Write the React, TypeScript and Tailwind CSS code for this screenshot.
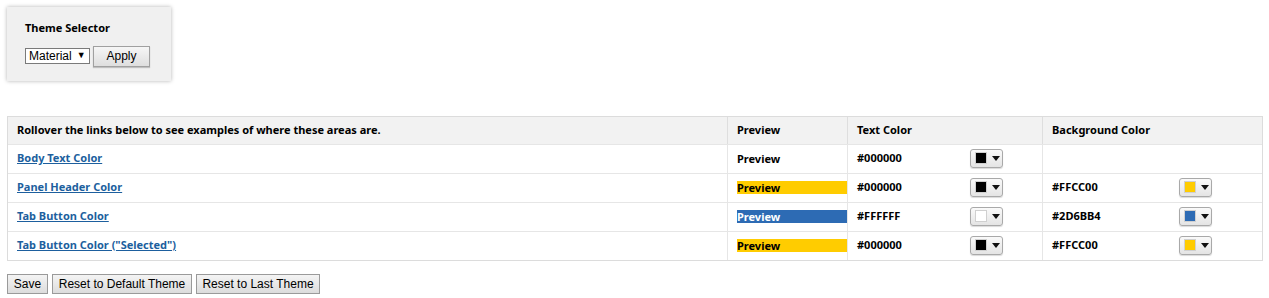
import React from "react";

const tf = { fontFamily: '"Noto Sans", Tahoma, sans-serif' };

function Swatch({ color }: { color: string }) {
  return (
    <div className="flex h-[19px] w-[33px] items-center rounded-[3px] border border-[#a9a9a9] bg-gradient-to-b from-[#fafafa] to-[#e4e4e4] pl-[4px] shadow-[0_1px_1px_rgba(0,0,0,0.15)]">
      <div className="h-[12px] w-[12px] border border-[#d0d0d0]" style={{ backgroundColor: color }} />
      <svg width="8" height="5" viewBox="0 0 8 5" className="ml-[5px]">
        <path d="M0 0h8L4 5z" fill="#111" />
      </svg>
    </div>
  );
}

function Row({
  label,
  prevBg,
  prevFg,
  text,
  textSw,
  bg,
  bgSw,
}: {
  label: string;
  prevBg?: string;
  prevFg: string;
  text: string;
  textSw: string;
  bg?: string;
  bgSw?: string;
}) {
  return (
    <div className="flex h-[29px] items-center border-t border-[#e6e6e6] text-[11px] font-bold text-black">
      <div className="flex h-full w-[720px] items-center border-r border-[#e6e6e6] pb-[2px] pl-[9px]">
        <a href="#" className="text-[#1d5f9e] underline">
          {label}
        </a>
      </div>
      <div className="flex h-full w-[120px] items-center border-r border-[#e6e6e6] pb-[2px] pl-[9px]">
        <div
          className="flex h-[13px] w-full items-center leading-none"
          style={{ backgroundColor: prevBg, color: prevFg }}
        >
          Preview
        </div>
      </div>
      <div className="flex h-full w-[195px] items-center border-r border-[#e6e6e6] pb-[2px] pl-[9px]">
        <span className="w-[113px]">{text}</span>
        <Swatch color={textSw} />
      </div>
      <div className="flex h-full flex-1 items-center pb-[2px] pl-[9px]">
        {bg && (
          <>
            <span className="w-[127px]">{bg}</span>
            <Swatch color={bgSw!} />
          </>
        )}
      </div>
    </div>
  );
}

export default function App() {
  return (
    <div className="relative h-[298px] w-[1269px] overflow-hidden bg-white" style={tf}>
      <div className="pl-[7px] pt-[7px]">
        <div className="h-[74px] w-[164px] bg-[#f0f0f0] pl-[18px] pt-[13px] shadow-[0_0_4px_rgba(0,0,0,0.3)]">
          <div className="text-[11px] font-bold text-black">Theme Selector</div>
          <div className="mt-[9px] flex items-center" style={{ fontFamily: '"Liberation Sans", Arial, sans-serif' }}>
            <div className="flex h-[16px] w-[65px] items-center border border-[#7a7a7a] bg-white pl-[3px] text-[12px] text-black">
              Material
              <span className="ml-[5px] text-[9px]">▼</span>
            </div>
            <div className="ml-[3px] flex h-[21px] w-[57px] items-center justify-center border border-[#a0a0a0] bg-gradient-to-b from-[#f6f6f6] to-[#dedede] text-[12px] text-black shadow-[0_1px_1px_rgba(0,0,0,0.2)]">
              Apply
            </div>
          </div>
        </div>
      </div>

      <div className="ml-[7px] mt-[35px] w-[1256px] border border-[#dcdcdc]">
        <div className="flex h-[27px] items-center bg-[#f2f2f2] text-[11px] font-bold text-black">
          <div className="flex h-full w-[720px] items-center border-r border-[#dedede] pl-[9px]">
            Rollover the links below to see examples of where these areas are.
          </div>
          <div className="flex h-full w-[120px] items-center border-r border-[#dedede] pl-[9px]">Preview</div>
          <div className="flex h-full w-[195px] items-center border-r border-[#dedede] pl-[9px]">Text Color</div>
          <div className="flex h-full flex-1 items-center pl-[9px]">Background Color</div>
        </div>
        <Row label="Body Text Color" prevFg="#000" text="#000000" textSw="#000000" />
        <Row label="Panel Header Color" prevBg="#FFCC00" prevFg="#000" text="#000000" textSw="#000000" bg="#FFCC00" bgSw="#FFCC00" />
        <Row label="Tab Button Color" prevBg="#2D6BB4" prevFg="#fff" text="#FFFFFF" textSw="#FFFFFF" bg="#2D6BB4" bgSw="#2D6BB4" />
        <Row label='Tab Button Color ("Selected")' prevBg="#FFCC00" prevFg="#000" text="#000000" textSw="#000000" bg="#FFCC00" bgSw="#FFCC00" />
      </div>

      <div className="ml-[7px] mt-[13px] flex gap-[4px] text-[12px] text-black" style={{ fontFamily: '"Liberation Sans", Arial, sans-serif' }}>
        <div className="flex h-[20px] w-[41px] items-center justify-center border border-[#9a9a9a] bg-gradient-to-b from-[#f4f4f4] to-[#dcdcdc]">Save</div>
        <div className="flex h-[20px] w-[140px] items-center justify-center border border-[#9a9a9a] bg-gradient-to-b from-[#f4f4f4] to-[#dcdcdc]">Reset to Default Theme</div>
        <div className="flex h-[20px] w-[124px] items-center justify-center border border-[#9a9a9a] bg-gradient-to-b from-[#f4f4f4] to-[#dcdcdc]">Reset to Last Theme</div>
      </div>
    </div>
  );
}
